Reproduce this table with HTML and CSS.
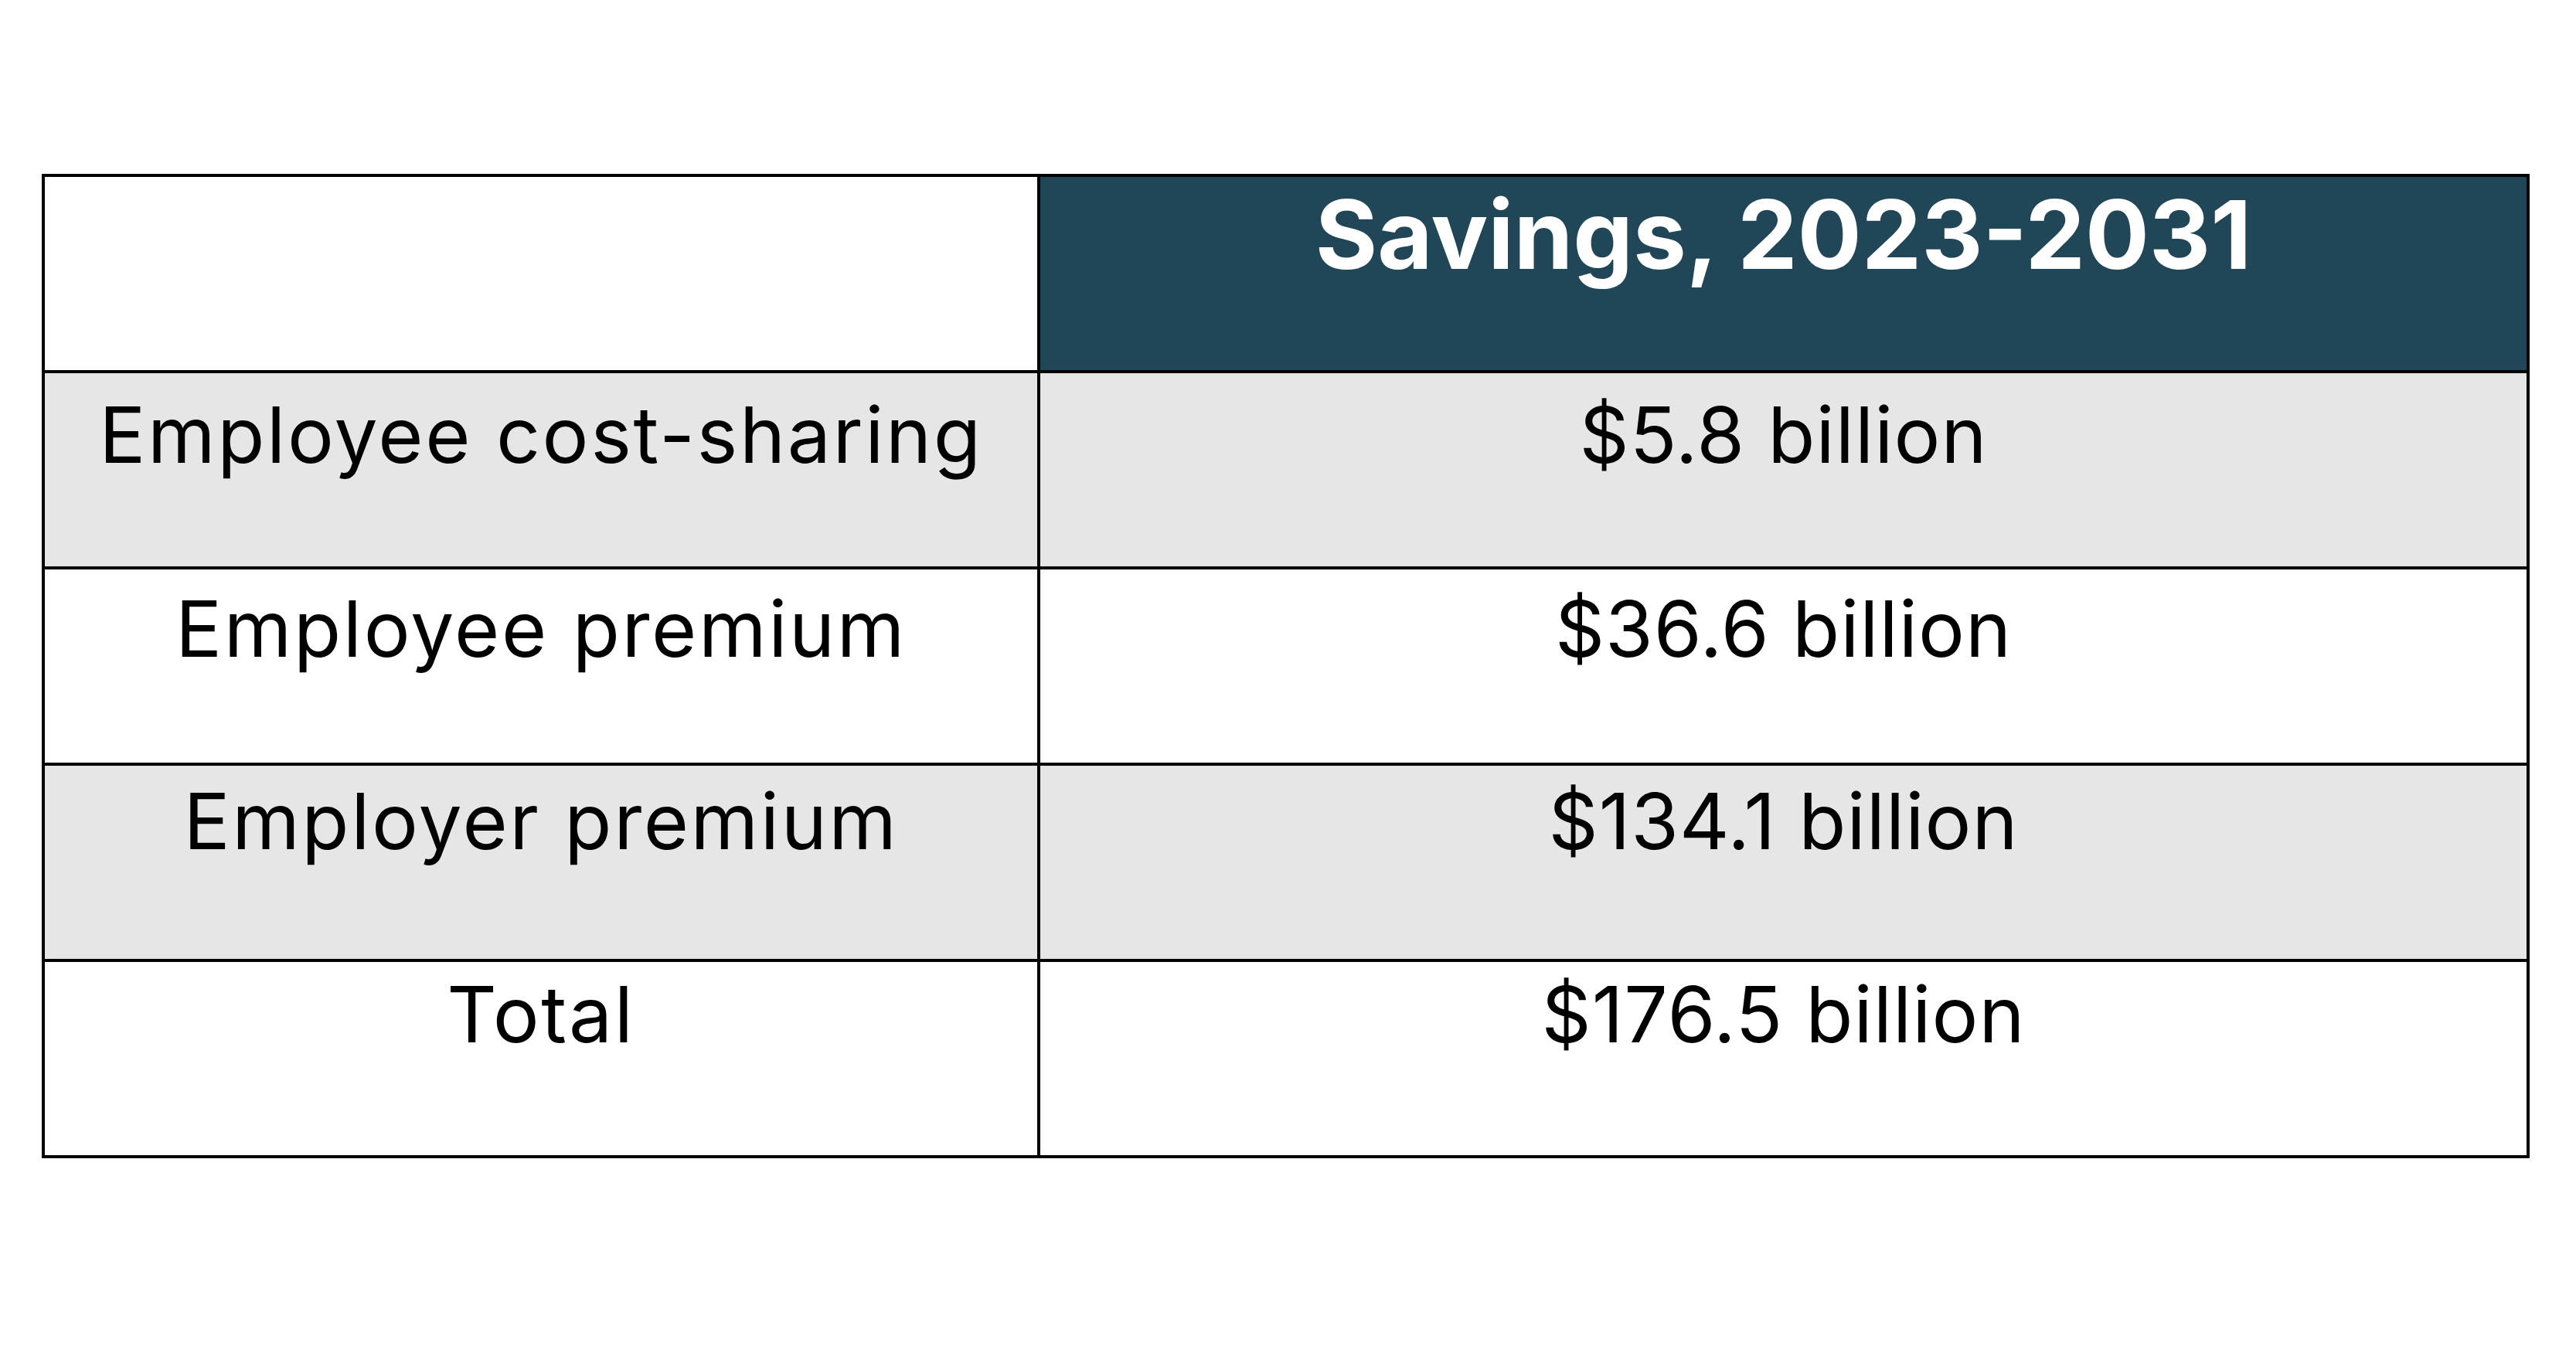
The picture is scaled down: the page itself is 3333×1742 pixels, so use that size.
FILE: index.html
```html
<!DOCTYPE html>
<html lang="en">
<head>
<meta charset="utf-8">
<title>Savings, 2023-2031</title>
<link rel="stylesheet" href="styles.css">
</head>
<body>
<main class="page">
  <table class="savings">
    <thead>
      <tr class="row-head">
        <th class="cell-blank"></th>
        <th class="cell-title">Savings, 2023-2031</th>
      </tr>
    </thead>
    <tbody>
      <tr class="row row-shade row-a">
        <td class="cell-label">Employee cost-sharing</td>
        <td class="cell-value">$5.8 billion</td>
      </tr>
      <tr class="row row-b">
        <td class="cell-label">Employee premium</td>
        <td class="cell-value">$36.6 billion</td>
      </tr>
      <tr class="row row-shade row-c">
        <td class="cell-label">Employer premium</td>
        <td class="cell-value">$134.1 billion</td>
      </tr>
      <tr class="row row-d">
        <td class="cell-label">Total</td>
        <td class="cell-value">$176.5 billion</td>
      </tr>
    </tbody>
  </table>
</main>
</body>
</html>
```
FILE: styles.css
```css
html, body {
  margin: 0;
  padding: 0;
  background: #ffffff;
}

.page {
  padding: 225px 0 0 54px;
  font-family: Inter, "Liberation Sans", Arial, sans-serif;
  color: #000000;
}

.savings {
  width: 3219px;
  border-collapse: separate;
  border-spacing: 4px;
  background: #000000;
  table-layout: fixed;
}

.savings th,
.savings td {
  padding: 0;
  vertical-align: top;
  text-align: center;
  height: 250px;
  box-sizing: border-box;
}

.cell-blank {
  width: 1284px;
  background: #ffffff;
}

.cell-title {
  width: 1923px;
  background: #204657;
  color: #ffffff;
  font-weight: 700;
  font-size: 123px;
  line-height: 150px;
  padding-top: 2px;
}

.row td {
  background: #ffffff;
  font-weight: 400;
  font-size: 100px;
  line-height: 120px;
}

.row td.cell-label {
  letter-spacing: 2.6px;
}

.row td.cell-value {
  letter-spacing: 1px;
}

.row-shade td {
  background: #e6e6e6;
}

.row-a td { padding-top: 20px; }
.row-b td { padding-top: 17px; }
.row-c td { padding-top: 12px; }
.row-d td { padding-top: 8px; }
```
